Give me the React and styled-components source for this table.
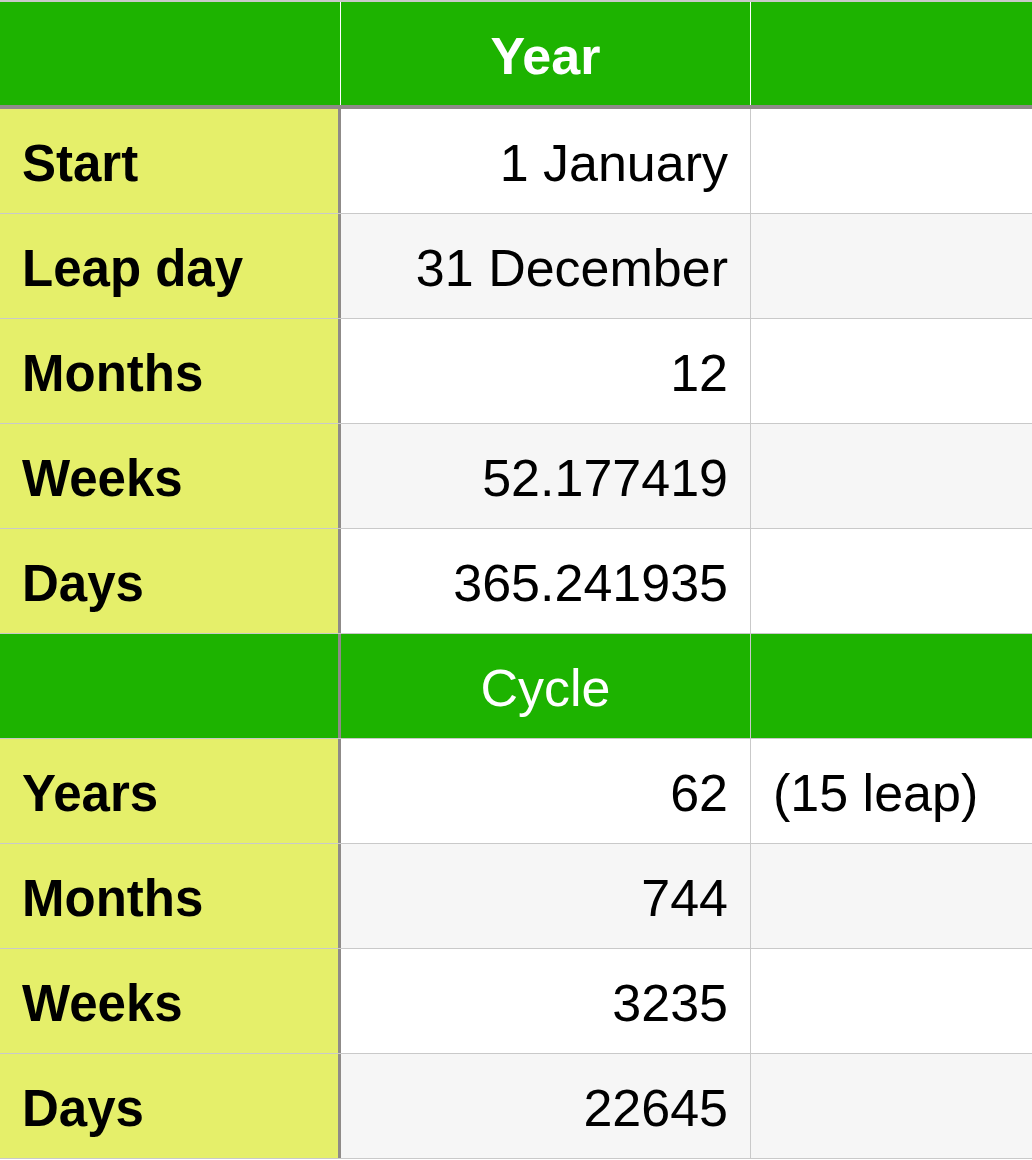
import React from 'react';
import styled, { createGlobalStyle } from 'styled-components';

const GlobalStyle = createGlobalStyle`
  html, body {
    margin: 0;
    padding: 0;
    background: #ffffff;
  }
  body {
    font-family: "Liberation Sans", Arial, sans-serif;
    color: #000;
  }
`;

const green = '#1db300';
const yellow = '#e5ef6a';
const rule = '#c9c9c9';
const heavy = '#8f8b88';

const Sheet = styled.div`
  width: 1032px;
  border-top: 2px solid ${rule};
  display: flex;
  flex-direction: column;
`;

const Row = styled.div`
  display: flex;
  height: ${(p) => (p.top ? '103px' : '104px')};
  border-bottom: ${(p) => (p.top ? `4px solid ${heavy}` : `1px solid ${rule}`)};
`;

const Cell = styled.div`
  box-sizing: border-box;
  display: flex;
  align-items: center;
  padding-top: 4px;
  font-size: 52px;
  white-space: nowrap;
`;

const LabelCell = styled(Cell)`
  width: 341px;
  flex: none;
  padding-left: 22px;
  font-size: 51px;
  font-weight: 700;
  background: ${(p) => (p.head ? green : yellow)};
  border-right: ${(p) => (p.top ? '1px solid #ffffff' : `3px solid ${heavy}`)};
`;

const ValueCell = styled(Cell)`
  width: 410px;
  flex: none;
  justify-content: ${(p) => (p.head ? 'center' : 'flex-end')};
  padding-right: ${(p) => (p.head ? '0' : '22px')};
  background: ${(p) => (p.head ? green : p.shade ? '#f6f6f6' : '#ffffff')};
  color: ${(p) => (p.head ? '#ffffff' : '#000')};
  font-weight: ${(p) => (p.bold ? 700 : 400)};
  border-right: 1px solid ${(p) => (p.top ? '#ffffff' : rule)};
`;

const NoteCell = styled(Cell)`
  flex: 1;
  padding-left: 22px;
  background: ${(p) => (p.head ? green : p.shade ? '#f6f6f6' : '#ffffff')};
`;

const sections = [
  {
    title: 'Year',
    bold: true,
    top: true,
    rows: [
      ['Start', '1 January'],
      ['Leap day', '31 December'],
      ['Months', '12'],
      ['Weeks', '52.177419'],
      ['Days', '365.241935'],
    ],
  },
  {
    title: 'Cycle',
    bold: false,
    top: false,
    rows: [
      ['Years', '62', '(15 leap)'],
      ['Months', '744'],
      ['Weeks', '3235'],
      ['Days', '22645'],
    ],
  },
];

export default function App() {
  return (
    <>
      <GlobalStyle />
      <Sheet>
        {sections.map((section) => (
          <React.Fragment key={section.title}>
            <Row top={section.top}>
              <LabelCell head top={section.top} />
              <ValueCell head top={section.top} bold={section.bold}>
                {section.title}
              </ValueCell>
              <NoteCell head />
            </Row>
            {section.rows.map(([label, value, note], i) => (
              <Row key={label + i}>
                <LabelCell>{label}</LabelCell>
                <ValueCell shade={i % 2 === 1}>{value}</ValueCell>
                <NoteCell shade={i % 2 === 1}>{note}</NoteCell>
              </Row>
            ))}
          </React.Fragment>
        ))}
      </Sheet>
    </>
  );
}
